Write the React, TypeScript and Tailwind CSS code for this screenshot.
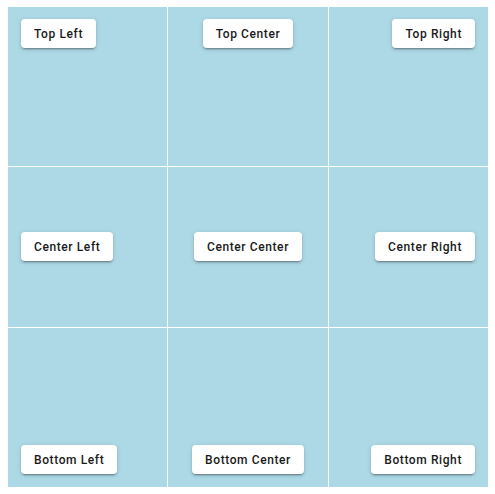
const cells = [
  { label: 'Top Left', place: 'items-start justify-start' },
  { label: 'Top Center', place: 'items-start justify-center' },
  { label: 'Top Right', place: 'items-start justify-end' },
  { label: 'Center Left', place: 'items-center justify-start' },
  { label: 'Center Center', place: 'items-center justify-center' },
  { label: 'Center Right', place: 'items-center justify-end' },
  { label: 'Bottom Left', place: 'items-end justify-start' },
  { label: 'Bottom Center', place: 'items-end justify-center' },
  { label: 'Bottom Right', place: 'items-end justify-end' },
];

export default function App() {
  return (
    <div className="min-h-[494px] bg-white pl-2 pt-[7px]" style={{ fontFamily: 'Roboto, "Liberation Sans", sans-serif' }}>
      <div className="grid h-[480px] w-[480px] grid-cols-3 grid-rows-3 gap-px bg-white">
        {cells.map((cell) => (
          <div key={cell.label} className={`flex bg-[#add8e6] px-[13px] pt-3 pb-[13px] ${cell.place}`}>
            <button className="h-[29px] rounded bg-white px-[13px] pt-px text-[12px] font-medium tracking-[0.6px] text-[#1a1a1a] shadow-[0_3px_1px_-2px_rgba(0,0,0,0.2),0_2px_2px_0_rgba(0,0,0,0.14),0_1px_5px_0_rgba(0,0,0,0.12)]">
              {cell.label}
            </button>
          </div>
        ))}
      </div>
    </div>
  );
}
